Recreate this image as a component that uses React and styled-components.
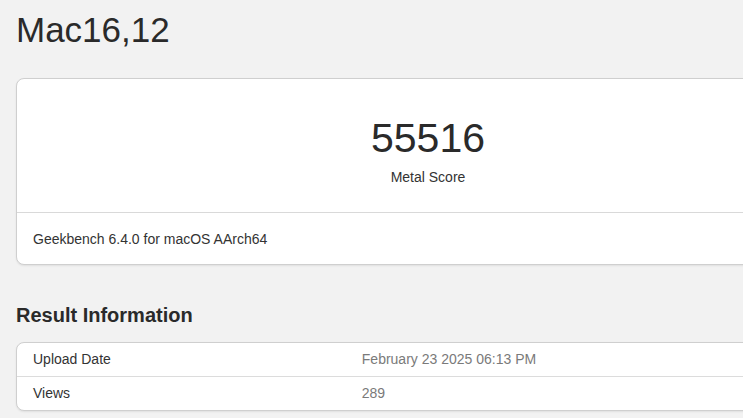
import React from 'react'
import styled, { createGlobalStyle } from 'styled-components'

const GlobalStyle = createGlobalStyle`
  body {
    margin: 0;
    background: #f2f2f2;
    font-family: "Liberation Sans", Arial, sans-serif;
    color: #333;
    overflow: hidden;
  }
`

const Page = styled.div`
  width: 824px;
  padding: 9px 16px 8px;
`

const Heading = styled.h1`
  margin: 0 0 27px;
  font-size: 35px;
  font-weight: 400;
  line-height: 1.2;
  color: #2a2a2a;
`

const Card = styled.div`
  background: #fff;
  border: 1px solid #cfcfcf;
  border-radius: 8px;
  box-shadow: 0 1px 2px rgba(0, 0, 0, 0.08);
  overflow: hidden;
`

const ScoreBox = styled.div`
  display: flex;
  flex-direction: column;
  align-items: center;
  padding: 35px 16px 25px;
  border-bottom: 1px solid #d9d9d9;
`

const Score = styled.div`
  font-size: 41px;
  line-height: 1.2;
  color: #2a2a2a;
  margin-bottom: 4px;
`

const ScoreLabel = styled.div`
  font-size: 14px;
  line-height: 20px;
  color: #333;
`

const CardFooter = styled.div`
  padding: 16px 16px 15px;
  font-size: 14px;
  line-height: 20px;
`

const SectionTitle = styled.h2`
  margin: 38px 0 15px;
  font-size: 20px;
  font-weight: 700;
  line-height: 1.2;
  color: #2a2a2a;
`

const Table = styled.div`
  background: #fff;
  border: 1px solid #cfcfcf;
  border-radius: 8px;
  box-shadow: 0 1px 2px rgba(0, 0, 0, 0.08);
  overflow: hidden;
`

const Row = styled.div`
  display: grid;
  grid-template-columns: 40% 60%;
  border-top: ${({ $first }) => ($first ? 'none' : '1px solid #dcdcdc')};
`

const Cell = styled.div`
  padding: 6px 16px 7px;
  font-size: 14px;
  line-height: 20px;
  color: ${({ $muted }) => ($muted ? '#7a7a7a' : '#333')};
`

const info = [
  ['Upload Date', 'February 23 2025 06:13 PM'],
  ['Views', '289'],
]

export default function App() {
  return (
    <>
      <GlobalStyle />
      <Page>
        <Heading>Mac16,12</Heading>
        <Card>
          <ScoreBox>
            <Score>55516</Score>
            <ScoreLabel>Metal Score</ScoreLabel>
          </ScoreBox>
          <CardFooter>Geekbench 6.4.0 for macOS AArch64</CardFooter>
        </Card>
        <SectionTitle>Result Information</SectionTitle>
        <Table>
          {info.map(([label, value], i) => (
            <Row key={label} $first={i === 0}>
              <Cell>{label}</Cell>
              <Cell $muted>{value}</Cell>
            </Row>
          ))}
        </Table>
      </Page>
    </>
  )
}
